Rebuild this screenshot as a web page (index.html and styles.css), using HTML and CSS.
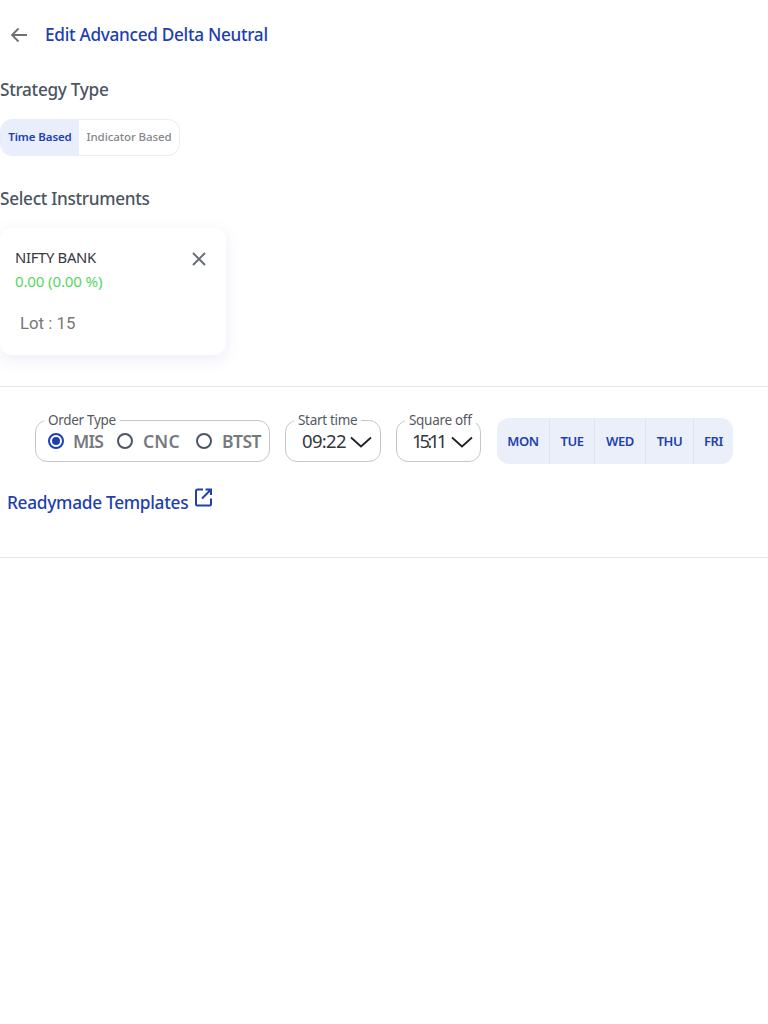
FILE: index.html
```html
<!DOCTYPE html>
<html lang="en">
<head>
<meta charset="utf-8">
<title>Edit Advanced Delta Neutral</title>
<link rel="stylesheet" href="styles.css">
</head>
<body>
<header class="page-head">
  <svg class="back" width="24" height="24" viewBox="0 0 24 24"><path d="M20 12H5M11.500 5.500 5 12l6.500 6.500" fill="none" stroke="#6b6f76" stroke-width="1.800"/></svg>
  <h1 class="page-title">Edit Advanced Delta Neutral</h1>
</header>
<h2 class="section-title first">Strategy Type</h2>
<div class="toggle">
  <span class="toggle-item active">Time Based</span>
  <span class="toggle-item">Indicator Based</span>
</div>
<h2 class="section-title second">Select Instruments</h2>
<section class="card">
  <div class="card-top">
    <div class="card-name">NIFTY BANK</div>
    <svg class="close" width="24" height="24" viewBox="0 0 24 24"><path d="M6 6l12 12M18 6L6 18" stroke="#666b72" stroke-width="1.900" fill="none"/></svg>
  </div>
  <div class="card-change">0.00 (0.00 %)</div>
  <div class="card-lot">Lot : 15</div>
</section>
<hr class="rule rule-a">
<div class="controls">
  <fieldset class="box box-order">
    <legend>Order Type</legend>
    <div class="radios">
      <span class="radio on"></span><span class="radio-label label-mis">MIS</span>
      <span class="radio"></span><span class="radio-label label-cnc">CNC</span>
      <span class="radio"></span><span class="radio-label label-btst">BTST</span>
    </div>
  </fieldset>
  <fieldset class="box box-start">
    <legend>Start time</legend>
    <div class="time"><span class="time-value">09:22</span><svg width="22" height="12" viewBox="0 0 22 12"><path d="M1 1.500l10 9 10-9" fill="none" stroke="#1f2329" stroke-width="1.800"/></svg></div>
  </fieldset>
  <fieldset class="box box-square">
    <legend>Square off</legend>
    <div class="time time-tight"><span class="time-value time-narrow">15:11</span><svg width="22" height="12" viewBox="0 0 22 12"><path d="M1 1.500l10 9 10-9" fill="none" stroke="#1f2329" stroke-width="1.800"/></svg></div>
  </fieldset>
  <div class="days">
    <span class="day d-mon">MON</span>
    <span class="day d-tue">TUE</span>
    <span class="day d-wed">WED</span>
    <span class="day d-thu">THU</span>
    <span class="day d-fri">FRI</span>
  </div>
</div>
<div class="templates">
  <span class="templates-text">Readymade Templates</span>
  <svg class="ext" width="24" height="24" viewBox="0 0 24 24"><path d="M12 3.500H6.500A1.500 1.500 0 0 0 5 5v13a1.500 1.500 0 0 0 1.500 1.500h12A1.500 1.500 0 0 0 20 18v-5.500M14.500 3.500H20V9M20 3.500l-9 9" fill="none" stroke="#1e40af" stroke-width="2"/></svg>
</div>
<hr class="rule rule-b">
</body>
</html>
```
FILE: styles.css
```css
* { box-sizing: border-box; }
html, body { margin: 0; background: #fff; }
body { font-family: "Noto Sans", "Open Sans", sans-serif; color: #4b5563; height: 1024px; overflow: hidden; }
.page-head { display: flex; align-items: center; height: 24px; margin-top: 23px; padding-left: 7px; gap: 14px; }
.page-title { margin: 0; font-size: 17.200px; font-weight: 500; color: #1e40af; letter-spacing: -0.300px; line-height: 24px; white-space: nowrap; }
.section-title { margin: 0; font-size: 17.200px; font-weight: 500; color: #4b5563; line-height: 24px; letter-spacing: -0.300px; }
.section-title.first { margin-top: 31px; }
.section-title.second { margin-top: 31px; }
.toggle { display: flex; width: 180px; height: 37px; margin-top: 17px; border: 1px solid #e9ecf5; border-radius: 12px; overflow: hidden; }
.toggle-item { display: flex; align-items: center; justify-content: center; font-size: 11.500px; font-weight: 500; color: #85878c; white-space: nowrap; flex: 1; letter-spacing: -0.100px; padding-bottom: 3px; }
.toggle-item.active { flex: 0 0 78px; background: #e8eefc; color: #1e40af; font-weight: 600; }
.card { width: 226px; height: 127px; margin-top: 17px; border-radius: 12px; background: #fff; box-shadow: 0 4px 16px rgba(90, 100, 200, 0.120); padding: 17px 15px 0; }
.card-top { display: flex; justify-content: space-between; align-items: center; height: 24px; }
.card-name { font-size: 14.800px; color: #333841; letter-spacing: -0.300px; }
.close { margin-top: 4px; }
.card-change { font-size: 15.200px; color: #55d85f; line-height: 24px; letter-spacing: -0.200px; }
.card-lot { font-family: Roboto, sans-serif; font-size: 16.800px; color: #777; margin: 20px 0 0 5px; line-height: 20px; }
.rule { margin: 0; border: 0; height: 1px; background: #e5e6e8; }
.rule-a { margin-top: 31px; }
.rule-b { margin-top: 47px; }
.controls { display: flex; align-items: flex-start; padding-top: 25px; margin-left: 35px; }
.box { margin: 0; padding: 0 4px 0 12px; border: 1px solid #c4c6ca; border-radius: 12px; height: 50px; min-inline-size: 0; flex: none; }
.box legend { padding: 0 4px; margin-left: -4px; font-size: 13.500px; color: #55595f; line-height: 16px; letter-spacing: -0.300px; white-space: nowrap; }
.box-order { width: 235px; }
.box-start { width: 96px; margin-left: 15px; }
.box-square { width: 85px; margin-left: 15px; }
.radios { display: flex; align-items: center; height: 26px; }
.radio { width: 16px; height: 16px; border: 2px solid #4b5563; border-radius: 50%; flex: none; display: flex; align-items: center; justify-content: center; }
.radio.on { border-color: #1e40af; }
.radio.on::after { content: ""; width: 8px; height: 8px; border-radius: 50%; background: #1e40af; }
.radio-label { font-size: 17.500px; font-weight: 600; color: #77797d; margin-left: 9px; white-space: nowrap; }
.label-mis { width: 31px; margin-right: 13px; letter-spacing: -0.700px; }
.label-cnc { width: 40px; margin: 0 13px 0 10px; letter-spacing: 0.200px; }
.label-btst { width: 40px; margin-left: 10px; letter-spacing: -0.500px; }
.time { display: flex; align-items: center; height: 26px; padding-left: 4px; gap: 4px; font-size: 18.500px; color: #333841; letter-spacing: -0.700px; white-space: nowrap; }
.time-tight { padding-left: 3px; }
.time svg { flex: none; margin-top: 2px; }
.time-value { margin-top: -2px; }
.time-narrow { letter-spacing: -3px; margin-right: 3px; }
.days { display: flex; height: 46px; margin: 6px 0 0 16px; background: #ebeff9; border-radius: 12px; overflow: hidden; flex: none; }
.day { display: flex; align-items: center; justify-content: center; font-size: 13px; font-weight: 600; color: #1e40af; letter-spacing: -0.400px; border-right: 1px solid #e0e4f0; }
.day:last-child { border-right: 0; }
.d-mon { width: 53px; }
.d-tue { width: 45px; }
.d-wed { width: 51px; }
.d-thu { width: 48px; }
.d-fri { width: 39px; }
.templates { display: flex; align-items: flex-start; height: 24px; margin: 22px 0 0 7px; gap: 3px; }
.templates-text { font-size: 17.300px; font-weight: 500; color: #1e40af; line-height: 24px; letter-spacing: -0.300px; margin-top: 5px; white-space: nowrap; }
.ext { flex: none; }
```
